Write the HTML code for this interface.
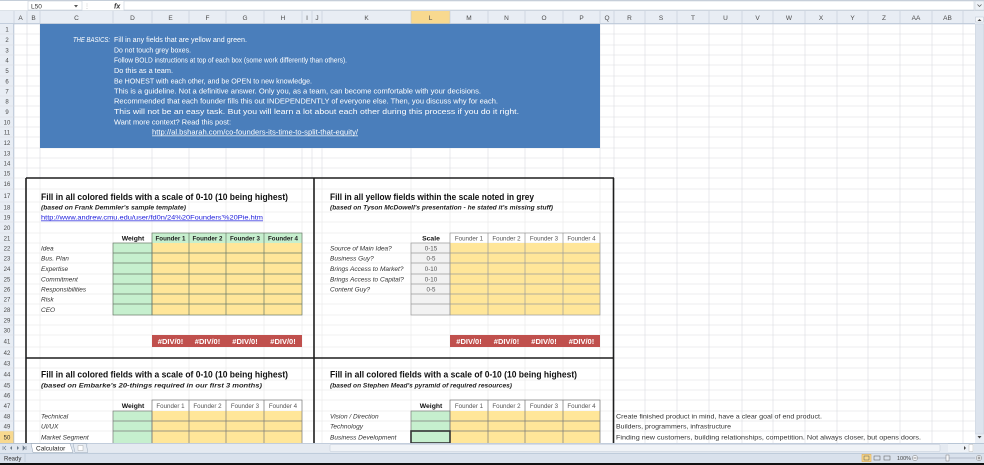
<!DOCTYPE html>
<html><head><meta charset="utf-8"><style>
html,body{margin:0;padding:0;width:984px;height:465px;overflow:hidden;background:#fff}
svg{display:block}
text{font-family:"Liberation Sans",sans-serif}
</style></head><body>
<svg width="984" height="465" viewBox="0 0 984 465" xmlns="http://www.w3.org/2000/svg">
<!-- formula bar -->
<rect x="0" y="0" width="984" height="11" fill="#fff"/>
<rect x="0" y="0" width="984" height="1" fill="#c5ced9"/>
<rect x="28" y="1" width="54" height="9" fill="#fff" stroke="#c8d0da" stroke-width="0.6"/>
<text x="31" y="8.3" font-size="6.5" fill="#333">L50</text>
<path d="M74 5 L78 5 L76 7.5 Z" fill="#555"/>
<text x="84" y="8" font-size="6" fill="#bbb">⋮</text>
<text x="114" y="8.5" font-size="7" font-style="italic" font-weight="bold" fill="#333">fx</text>
<rect x="124" y="1" width="850" height="9" fill="#fff" stroke="#c8d0da" stroke-width="0.6"/>
<rect x="975" y="1" width="9" height="9" fill="#eef2f7" stroke="#c8d0da" stroke-width="0.5"/>
<path d="M977.5 4.5 L979.5 6.5 L981.5 4.5" fill="none" stroke="#555" stroke-width="0.7"/>
<rect x="0" y="10.5" width="984" height="0.7" fill="#b9c4d2"/>
<!-- column header -->
<rect x="0" y="11" width="975" height="13" fill="#e8edf4"/>
<rect x="411" y="11" width="39" height="13" fill="#f8d98f"/>
<rect x="0" y="23.5" width="975" height="0.7" fill="#9eb0c6"/>
<g stroke="#c0cad6" stroke-width="0.6">
<line x1="14" y1="11" x2="14" y2="24"/><line x1="27" y1="11" x2="27" y2="24"/><line x1="40" y1="11" x2="40" y2="24"/><line x1="113" y1="11" x2="113" y2="24"/><line x1="152" y1="11" x2="152" y2="24"/><line x1="189" y1="11" x2="189" y2="24"/><line x1="226" y1="11" x2="226" y2="24"/><line x1="264" y1="11" x2="264" y2="24"/><line x1="302" y1="11" x2="302" y2="24"/><line x1="312" y1="11" x2="312" y2="24"/><line x1="322" y1="11" x2="322" y2="24"/><line x1="411" y1="11" x2="411" y2="24"/><line x1="450" y1="11" x2="450" y2="24"/><line x1="488" y1="11" x2="488" y2="24"/><line x1="525" y1="11" x2="525" y2="24"/><line x1="563" y1="11" x2="563" y2="24"/><line x1="600" y1="11" x2="600" y2="24"/><line x1="614" y1="11" x2="614" y2="24"/><line x1="645" y1="11" x2="645" y2="24"/><line x1="677" y1="11" x2="677" y2="24"/><line x1="709" y1="11" x2="709" y2="24"/><line x1="742" y1="11" x2="742" y2="24"/><line x1="773" y1="11" x2="773" y2="24"/><line x1="805" y1="11" x2="805" y2="24"/><line x1="837" y1="11" x2="837" y2="24"/><line x1="868" y1="11" x2="868" y2="24"/><line x1="900" y1="11" x2="900" y2="24"/><line x1="932" y1="11" x2="932" y2="24"/><line x1="963" y1="11" x2="963" y2="24"/>
</g>
<g font-size="6.5" fill="#4a4a4a" text-anchor="middle">
<text x="20.5" y="20">A</text><text x="33.5" y="20">B</text><text x="76.5" y="20">C</text><text x="132.5" y="20">D</text><text x="170.5" y="20">E</text><text x="207.5" y="20">F</text><text x="245" y="20">G</text><text x="283" y="20">H</text><text x="307" y="20">I</text><text x="317" y="20">J</text><text x="366.5" y="20">K</text><text x="430.5" y="20">L</text><text x="469" y="20">M</text><text x="506.5" y="20">N</text><text x="544" y="20">O</text><text x="581.5" y="20">P</text><text x="607" y="20">Q</text><text x="629.5" y="20">R</text><text x="661" y="20">S</text><text x="693" y="20">T</text><text x="725.5" y="20">U</text><text x="757.5" y="20">V</text><text x="789" y="20">W</text><text x="821" y="20">X</text><text x="852.5" y="20">Y</text><text x="884" y="20">Z</text><text x="916" y="20">AA</text><text x="947.5" y="20">AB</text>
</g>
<!-- row header -->
<rect x="0" y="24" width="14" height="419" fill="#e8edf4"/>
<rect x="0" y="431" width="14" height="12" fill="#f8d98f"/>
<rect x="13.5" y="24" width="0.7" height="419" fill="#9eb0c6"/>
<!-- gridlines -->
<g stroke="#dadcdf" stroke-width="0.6">
<line x1="0" y1="34" x2="975" y2="34"/><line x1="0" y1="45" x2="975" y2="45"/><line x1="0" y1="55" x2="975" y2="55"/><line x1="0" y1="65" x2="975" y2="65"/><line x1="0" y1="76" x2="975" y2="76"/><line x1="0" y1="86" x2="975" y2="86"/><line x1="0" y1="96" x2="975" y2="96"/><line x1="0" y1="106" x2="975" y2="106"/><line x1="0" y1="117" x2="975" y2="117"/><line x1="0" y1="127" x2="975" y2="127"/><line x1="0" y1="137" x2="975" y2="137"/><line x1="0" y1="148" x2="975" y2="148"/><line x1="0" y1="158" x2="975" y2="158"/><line x1="0" y1="168" x2="975" y2="168"/><line x1="0" y1="178" x2="975" y2="178"/><line x1="0" y1="189" x2="975" y2="189"/><line x1="0" y1="202" x2="975" y2="202"/><line x1="0" y1="212" x2="975" y2="212"/><line x1="0" y1="222" x2="975" y2="222"/><line x1="0" y1="233" x2="975" y2="233"/><line x1="0" y1="243" x2="975" y2="243"/><line x1="0" y1="253" x2="975" y2="253"/><line x1="0" y1="263" x2="975" y2="263"/><line x1="0" y1="274" x2="975" y2="274"/><line x1="0" y1="284" x2="975" y2="284"/><line x1="0" y1="294" x2="975" y2="294"/><line x1="0" y1="304" x2="975" y2="304"/><line x1="0" y1="315" x2="975" y2="315"/><line x1="0" y1="325" x2="975" y2="325"/><line x1="0" y1="335" x2="975" y2="335"/><line x1="0" y1="347" x2="975" y2="347"/><line x1="0" y1="358" x2="975" y2="358"/><line x1="0" y1="368" x2="975" y2="368"/><line x1="0" y1="380" x2="975" y2="380"/><line x1="0" y1="390" x2="975" y2="390"/><line x1="0" y1="400" x2="975" y2="400"/><line x1="0" y1="411" x2="975" y2="411"/><line x1="0" y1="421" x2="975" y2="421"/><line x1="0" y1="431" x2="975" y2="431"/>
</g>
<g stroke="#dadcdf" stroke-width="0.6">
<line x1="27" y1="24" x2="27" y2="443"/><line x1="40" y1="24" x2="40" y2="443"/><line x1="113" y1="24" x2="113" y2="443"/><line x1="152" y1="24" x2="152" y2="443"/><line x1="189" y1="24" x2="189" y2="443"/><line x1="226" y1="24" x2="226" y2="443"/><line x1="264" y1="24" x2="264" y2="443"/><line x1="302" y1="24" x2="302" y2="443"/><line x1="312" y1="24" x2="312" y2="443"/><line x1="322" y1="24" x2="322" y2="443"/><line x1="411" y1="24" x2="411" y2="443"/><line x1="450" y1="24" x2="450" y2="443"/><line x1="488" y1="24" x2="488" y2="443"/><line x1="525" y1="24" x2="525" y2="443"/><line x1="563" y1="24" x2="563" y2="443"/><line x1="600" y1="24" x2="600" y2="443"/><line x1="614" y1="24" x2="614" y2="443"/><line x1="645" y1="24" x2="645" y2="443"/><line x1="677" y1="24" x2="677" y2="443"/><line x1="709" y1="24" x2="709" y2="443"/><line x1="742" y1="24" x2="742" y2="443"/><line x1="773" y1="24" x2="773" y2="443"/><line x1="805" y1="24" x2="805" y2="443"/><line x1="837" y1="24" x2="837" y2="443"/><line x1="868" y1="24" x2="868" y2="443"/><line x1="900" y1="24" x2="900" y2="443"/><line x1="932" y1="24" x2="932" y2="443"/><line x1="963" y1="24" x2="963" y2="443"/>
</g>
<g font-size="6" fill="#4a4a4a" text-anchor="middle">
<text x="7" y="31.5">1</text><text x="7" y="42">2</text><text x="7" y="52.5">3</text><text x="7" y="62.5">4</text><text x="7" y="73">5</text><text x="7" y="83.5">6</text><text x="7" y="93.5">7</text><text x="7" y="103.5">8</text><text x="7" y="114">9</text><text x="7" y="124.5">10</text><text x="7" y="134.5">11</text><text x="7" y="145">12</text><text x="7" y="155.5">13</text><text x="7" y="165.5">14</text><text x="7" y="175.5">15</text><text x="7" y="186">16</text><text x="7" y="198">17</text><text x="7" y="209.5">18</text><text x="7" y="219.5">19</text><text x="7" y="230">20</text><text x="7" y="240.5">21</text><text x="7" y="250.5">22</text><text x="7" y="260.5">23</text><text x="7" y="271">24</text><text x="7" y="281.5">25</text><text x="7" y="291.5">26</text><text x="7" y="301.5">27</text><text x="7" y="312">28</text><text x="7" y="322.5">29</text><text x="7" y="332.5">30</text><text x="7" y="343.5">41</text><text x="7" y="355">42</text><text x="7" y="365.5">43</text><text x="7" y="376.5">44</text><text x="7" y="387.5">45</text><text x="7" y="397.5">46</text><text x="7" y="408">47</text><text x="7" y="418.5">48</text><text x="7" y="428.5">49</text><text x="7" y="439.5" fill="#333">50</text>
</g>
<!-- blue box -->
<rect x="40" y="24" width="560" height="124" fill="#4a7ebb"/>
<g font-size="7" fill="#fff">
<text x="73" y="42" font-style="italic" textLength="37" lengthAdjust="spacingAndGlyphs">THE BASICS:</text>
<text x="114" y="42" textLength="133" lengthAdjust="spacingAndGlyphs">Fill in any fields that are yellow and green.</text>
<text x="114" y="52.5" textLength="77" lengthAdjust="spacingAndGlyphs">Do not touch grey boxes.</text>
<text x="114" y="62.5" textLength="233" lengthAdjust="spacingAndGlyphs">Follow BOLD instructions at top of each box (some work differently than others).</text>
<text x="114" y="73" textLength="59" lengthAdjust="spacingAndGlyphs">Do this as a team.</text>
<text x="114" y="83.5" textLength="198" lengthAdjust="spacingAndGlyphs">Be HONEST with each other, and be OPEN to new knowledge.</text>
<text x="114" y="93.5" textLength="367" lengthAdjust="spacingAndGlyphs">This is a guideline.  Not a definitive answer.  Only you, as a team, can become comfortable with your decisions.</text>
<text x="114" y="103.5" textLength="384" lengthAdjust="spacingAndGlyphs">Recommended that each founder fills this out INDEPENDENTLY of everyone else.  Then, you discuss why for each.</text>
<text x="114" y="114" textLength="405" lengthAdjust="spacingAndGlyphs">This will not be an easy task.  But you will learn a lot about each other during this process if you do it right.</text>
<text x="114" y="124.5" textLength="117" lengthAdjust="spacingAndGlyphs">Want more context?  Read this post:</text>
<text x="152" y="134.5" text-decoration="underline" textLength="206" lengthAdjust="spacingAndGlyphs">http://al.bsharah.com/co-founders-its-time-to-split-that-equity/</text>
</g>
<!-- section boxes: white fill to hide grid inside -->
<rect x="26" y="178" width="588" height="265" fill="#fff"/>
<g stroke="#e4e4e4" stroke-width="0.5">
<line x1="26" y1="189" x2="614" y2="189"/><line x1="26" y1="202" x2="614" y2="202"/><line x1="26" y1="212" x2="614" y2="212"/><line x1="26" y1="222" x2="614" y2="222"/><line x1="26" y1="233" x2="614" y2="233"/><line x1="26" y1="243" x2="614" y2="243"/><line x1="26" y1="253" x2="614" y2="253"/><line x1="26" y1="263" x2="614" y2="263"/><line x1="26" y1="274" x2="614" y2="274"/><line x1="26" y1="284" x2="614" y2="284"/><line x1="26" y1="294" x2="614" y2="294"/><line x1="26" y1="304" x2="614" y2="304"/><line x1="26" y1="315" x2="614" y2="315"/><line x1="26" y1="325" x2="614" y2="325"/><line x1="26" y1="335" x2="614" y2="335"/><line x1="26" y1="347" x2="614" y2="347"/><line x1="26" y1="368" x2="614" y2="368"/><line x1="26" y1="380" x2="614" y2="380"/><line x1="26" y1="390" x2="614" y2="390"/><line x1="26" y1="400" x2="614" y2="400"/><line x1="26" y1="411" x2="614" y2="411"/><line x1="26" y1="421" x2="614" y2="421"/><line x1="26" y1="431" x2="614" y2="431"/>
<line x1="40" y1="178" x2="40" y2="443"/><line x1="113" y1="178" x2="113" y2="443"/><line x1="152" y1="178" x2="152" y2="443"/><line x1="189" y1="178" x2="189" y2="443"/><line x1="226" y1="178" x2="226" y2="443"/><line x1="264" y1="178" x2="264" y2="443"/><line x1="302" y1="178" x2="302" y2="443"/><line x1="322" y1="178" x2="322" y2="443"/><line x1="411" y1="178" x2="411" y2="443"/><line x1="450" y1="178" x2="450" y2="443"/><line x1="488" y1="178" x2="488" y2="443"/><line x1="525" y1="178" x2="525" y2="443"/><line x1="563" y1="178" x2="563" y2="443"/><line x1="600" y1="178" x2="600" y2="443"/>
</g>
<!-- table 1 -->
<rect x="152" y="233" width="150" height="10" fill="#c6efce"/>
<rect x="113" y="243" width="39" height="72" fill="#c6efce"/>
<rect x="152" y="243" width="150" height="72" fill="#ffe699"/>
<g stroke="#6a7a6a" stroke-width="0.7" fill="none">
<rect x="152" y="233" width="150" height="82"/><rect x="113" y="243" width="39" height="72"/>
<line x1="189" y1="233" x2="189" y2="315"/><line x1="226" y1="233" x2="226" y2="315"/><line x1="264" y1="233" x2="264" y2="315"/>
<line x1="113" y1="253" x2="302" y2="253"/><line x1="113" y1="263" x2="302" y2="263"/><line x1="113" y1="274" x2="302" y2="274"/><line x1="113" y1="284" x2="302" y2="284"/><line x1="113" y1="294" x2="302" y2="294"/><line x1="113" y1="304" x2="302" y2="304"/>
</g>
<!-- table 2 -->
<rect x="411" y="243" width="39" height="72" fill="#f2f2f2"/>
<rect x="450" y="243" width="150" height="72" fill="#ffe699"/>
<g stroke="#9a9a9a" stroke-width="0.7" fill="none">
<rect x="450" y="233" width="150" height="82"/><rect x="411" y="243" width="39" height="72"/>
<line x1="488" y1="233" x2="488" y2="315"/><line x1="525" y1="233" x2="525" y2="315"/><line x1="563" y1="233" x2="563" y2="315"/>
<line x1="411" y1="253" x2="600" y2="253"/><line x1="411" y1="263" x2="600" y2="263"/><line x1="411" y1="274" x2="600" y2="274"/><line x1="411" y1="284" x2="600" y2="284"/><line x1="411" y1="294" x2="600" y2="294"/><line x1="411" y1="304" x2="600" y2="304"/>
</g>
<!-- red rows -->
<rect x="152" y="335" width="150" height="12" fill="#c0504d"/>
<rect x="450" y="335" width="150" height="12" fill="#c0504d"/>
<g font-size="7.5" font-weight="bold" fill="#fff" text-anchor="middle">
<text x="170.5" y="344">#DIV/0!</text><text x="207.5" y="344">#DIV/0!</text><text x="245" y="344">#DIV/0!</text><text x="283" y="344">#DIV/0!</text>
<text x="469" y="344">#DIV/0!</text><text x="506.5" y="344">#DIV/0!</text><text x="544" y="344">#DIV/0!</text><text x="581.5" y="344">#DIV/0!</text>
</g>
<!-- table 3 & 4 -->
<rect x="113" y="411" width="39" height="32" fill="#c6efce"/>
<rect x="152" y="411" width="150" height="32" fill="#ffe699"/>
<rect x="411" y="411" width="39" height="32" fill="#c6efce"/>
<rect x="450" y="411" width="150" height="32" fill="#ffe699"/>
<g stroke="#7a7a7a" stroke-width="0.7" fill="none">
<rect x="152" y="400" width="150" height="45"/><rect x="113" y="411" width="39" height="34"/>
<line x1="189" y1="400" x2="189" y2="443"/><line x1="226" y1="400" x2="226" y2="443"/><line x1="264" y1="400" x2="264" y2="443"/>
<line x1="113" y1="421" x2="302" y2="421"/><line x1="113" y1="431" x2="302" y2="431"/>
<rect x="450" y="400" width="150" height="45"/><rect x="411" y="411" width="39" height="34"/>
<line x1="488" y1="400" x2="488" y2="443"/><line x1="525" y1="400" x2="525" y2="443"/><line x1="563" y1="400" x2="563" y2="443"/>
<line x1="411" y1="421" x2="600" y2="421"/><line x1="411" y1="431" x2="600" y2="431"/>
</g>
<rect x="411" y="431" width="39" height="12" fill="none" stroke="#333" stroke-width="1.6"/>
<!-- thick box borders -->
<g stroke="#1e1e1e" stroke-width="1.6" fill="none">
<line x1="26" y1="178" x2="614" y2="178"/><line x1="26" y1="358" x2="614" y2="358"/>
<line x1="26" y1="178" x2="26" y2="443"/><line x1="314" y1="178" x2="314" y2="443"/><line x1="613.5" y1="178" x2="613.5" y2="443"/>
</g>
<!-- section text -->
<g font-size="9" font-weight="bold" fill="#111">
<text x="41" y="200" textLength="247" lengthAdjust="spacingAndGlyphs">Fill in all colored fields with a scale of 0-10 (10 being highest)</text>
<text x="330" y="200" textLength="204" lengthAdjust="spacingAndGlyphs">Fill in all yellow fields within the scale noted in grey</text>
<text x="41" y="377.5" textLength="247" lengthAdjust="spacingAndGlyphs">Fill in all colored fields with a scale of 0-10 (10 being highest)</text>
<text x="330" y="377.5" textLength="247" lengthAdjust="spacingAndGlyphs">Fill in all colored fields with a scale of 0-10 (10 being highest)</text>
</g>
<g font-size="6.3" font-weight="bold" font-style="italic" fill="#222">
<text x="41" y="209.5" textLength="145" lengthAdjust="spacingAndGlyphs">(based on Frank Demmler's sample template)</text>
<text x="330" y="209.5" textLength="223" lengthAdjust="spacingAndGlyphs">(based on Tyson McDowell's presentation - he stated it's missing stuff)</text>
<text x="41" y="387.5" textLength="221" lengthAdjust="spacingAndGlyphs">(based on Embarke's 20-things required in our first 3 months)</text>
<text x="330" y="387.5" textLength="182" lengthAdjust="spacingAndGlyphs">(based on Stephen Mead's pyramid of required resources)</text>
</g>
<text x="41" y="219.5" font-size="6.8" fill="#1a1adc" text-decoration="underline" textLength="222" lengthAdjust="spacingAndGlyphs">http://www.andrew.cmu.edu/user/fd0n/24%20Founders'%20Pie.htm</text>
<g font-size="6.8" font-weight="bold" fill="#111" text-anchor="middle">
<text x="133" y="240.5">Weight</text><text x="431" y="240.5">Scale</text>
<text x="133" y="408">Weight</text><text x="431" y="408">Weight</text>
</g>
<g font-size="6.2" font-weight="bold" fill="#222" text-anchor="middle">
<text x="170.5" y="240.5">Founder 1</text><text x="207.5" y="240.5">Founder 2</text><text x="245" y="240.5">Founder 3</text><text x="283" y="240.5">Founder 4</text>
</g>
<g font-size="6.2" fill="#555" text-anchor="middle">
<text x="469" y="240.5">Founder 1</text><text x="506.5" y="240.5">Founder 2</text><text x="544" y="240.5">Founder 3</text><text x="581.5" y="240.5">Founder 4</text>
<text x="170.5" y="408">Founder 1</text><text x="207.5" y="408">Founder 2</text><text x="245" y="408">Founder 3</text><text x="283" y="408">Founder 4</text>
<text x="469" y="408">Founder 1</text><text x="506.5" y="408">Founder 2</text><text x="544" y="408">Founder 3</text><text x="581.5" y="408">Founder 4</text>
<text x="431" y="250.5">0-15</text><text x="431" y="260.5">0-5</text><text x="431" y="271">0-10</text><text x="431" y="281.5">0-10</text><text x="431" y="291.5">0-5</text>
</g>
<g font-size="6.5" font-style="italic" fill="#333">
<text x="41" y="250.5">Idea</text><text x="41" y="260.5">Bus. Plan</text><text x="41" y="271">Expertise</text><text x="41" y="281.5">Commitment</text><text x="41" y="291.5">Responsibilities</text><text x="41" y="301.5">Risk</text><text x="41" y="312">CEO</text>
<text x="330" y="250.5">Source of Main Idea?</text><text x="330" y="260.5">Business Guy?</text><text x="330" y="271">Brings Access to Market?</text><text x="330" y="281.5">Brings Access to Capital?</text><text x="330" y="291.5">Content Guy?</text>
<text x="41" y="418.5">Technical</text><text x="41" y="428.5">UI/UX</text><text x="41" y="439.5">Market Segment</text>
<text x="330" y="418.5">Vision / Direction</text><text x="330" y="428.5">Technology</text><text x="330" y="439.5">Business Development</text>
</g>
<g font-size="6.6" fill="#333">
<text x="616" y="418.5" textLength="206" lengthAdjust="spacingAndGlyphs">Create finished product in mind, have a clear goal of end product.</text>
<text x="616" y="428.5" textLength="115" lengthAdjust="spacingAndGlyphs">Builders, programmers, infrastructure</text>
<text x="616" y="439.5" textLength="305" lengthAdjust="spacingAndGlyphs">Finding new customers, building relationships, competition.  Not always closer, but opens doors.</text>
</g>
<!-- vertical scrollbar -->
<rect x="975" y="11" width="9" height="432" fill="#e9eef5"/>
<rect x="975.5" y="17" width="8" height="5" fill="#f6f8fb" stroke="#b7c2d0" stroke-width="0.5"/>
<rect x="975.5" y="24" width="8" height="410" fill="#dde4ee" stroke="#c6cfdb" stroke-width="0.5"/>
<path d="M977.5 21 L979.5 19 L981.5 21 Z" fill="#444"/>
<path d="M977.5 436 L979.5 438.5 L981.5 436 Z" fill="#444"/>
<!-- sheet tab bar -->
<rect x="0" y="443" width="984" height="10" fill="#dfe6ef"/>
<rect x="0" y="443" width="984" height="0.6" fill="#9eb0c6"/>
<g fill="#6a7a8a" font-size="5">
<path d="M3 446 L3 450 M6 446 L4 448 L6 450" stroke="#6a7a8a" stroke-width="0.6" fill="none"/>
<path d="M12 446 L10 448 L12 450 Z"/><path d="M17 446 L19 448 L17 450 Z"/>
<path d="M23 446 L25 448 L23 450 Z M26 446 L26 450" stroke="#6a7a8a" stroke-width="0.6"/>
</g>
<path d="M31 443.5 L70 443.5 L73 452.5 L33 452.5 Z" fill="#fff" stroke="#8d9cae" stroke-width="0.5"/>
<text x="36" y="450.5" font-size="6.5" fill="#222">Calculator</text>
<path d="M73 443.5 L86 443.5 L88 452.5 L75 452.5 Z" fill="#e6ebf2" stroke="#9aa8b8" stroke-width="0.5"/>
<rect x="78" y="445.5" width="5" height="5" fill="#fff" stroke="#999" stroke-width="0.4"/>
<rect x="88" y="443.5" width="860" height="9" fill="#e5eaf1"/>
<rect x="330" y="444.5" width="610" height="7" rx="1" fill="#f0f3f7" stroke="#c1cbd7" stroke-width="0.5"/>
<rect x="948" y="444" width="26" height="8" fill="#eef2f7"/>
<path d="M964 446 L966 448 L964 450 Z" fill="#444"/>
<rect x="969" y="444.5" width="4" height="7" fill="#fff" stroke="#aaa" stroke-width="0.4"/>
<!-- status bar -->
<rect x="0" y="453" width="984" height="10" fill="#d9e1ec"/>
<rect x="0" y="453" width="984" height="0.6" fill="#aebdd0"/>
<text x="4" y="460.5" font-size="6" fill="#333">Ready</text>
<line x1="25" y1="454" x2="25" y2="462" stroke="#b0bccb" stroke-width="0.5"/>
<rect x="862" y="454.5" width="9" height="7" fill="#f8d98f" stroke="#e0a030" stroke-width="0.5"/>
<rect x="864" y="456" width="5" height="4" fill="none" stroke="#555" stroke-width="0.5"/>
<rect x="874" y="456" width="6" height="4" fill="none" stroke="#555" stroke-width="0.5"/>
<rect x="884" y="456" width="6" height="4" fill="none" stroke="#555" stroke-width="0.5"/>
<text x="897" y="460" font-size="5.5" fill="#444">100%</text>
<circle cx="915" cy="458" r="2.6" fill="#f4f6f9" stroke="#777" stroke-width="0.5"/>
<line x1="913.5" y1="458" x2="916.5" y2="458" stroke="#444" stroke-width="0.6"/>
<line x1="918" y1="458" x2="975" y2="458" stroke="#8b98a8" stroke-width="0.6"/>
<rect x="946" y="455" width="3" height="6" fill="#f4f6f9" stroke="#666" stroke-width="0.4"/>
<circle cx="979" cy="458" r="2.6" fill="#f4f6f9" stroke="#777" stroke-width="0.5"/>
<path d="M977.5 458 L980.5 458 M979 456.5 L979 459.5" stroke="#444" stroke-width="0.6"/>
<rect x="0" y="463" width="984" height="2" fill="#111"/>
</svg>
</body></html>
